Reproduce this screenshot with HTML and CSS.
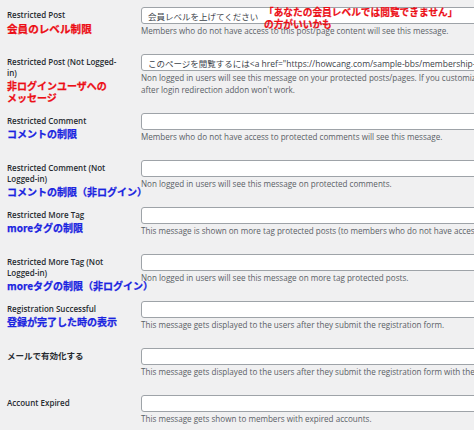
FILE: index.html
```html
<!DOCTYPE html>
<html lang="ja">
<head>
<meta charset="utf-8">
<title>Messages</title>
<link rel="stylesheet" href="styles.css">
</head>
<body>
<div class="form">
  <div class="row">
    <div class="label">
      <div class="name">Restricted Post</div>
      <div class="note red big">会員のレベル制限</div>
    </div>
    <div class="field">
      <input class="text" type="text" value="会員レベルを上げてください" readonly>
      <p class="desc">Members who do not have access to this post/page content will see this message.</p>
    </div>
  </div>

  <div class="row tall">
    <div class="label">
      <div class="name">Restricted Post (Not Logged-<br>in)</div>
      <div class="note red">非ログインユーザへの<br>メッセージ</div>
    </div>
    <div class="field">
      <input class="text" type="text" value="このページを閲覧するには&lt;a href=&quot;https://howcang.com/sample-bbs/membership-login/&quot;&gt;ログイン&lt;/a&gt;してください" readonly>
      <p class="desc">Non logged in users will see this message on your protected posts/pages. If you customize this message, the redirect<br>after login redirection addon won't work.</p>
    </div>
  </div>

  <div class="row">
    <div class="label">
      <div class="name">Restricted Comment</div>
      <div class="note blue">コメントの制限</div>
    </div>
    <div class="field">
      <input class="text" type="text" value="" readonly>
      <p class="desc">Members who do not have access to protected comments will see this message.</p>
    </div>
  </div>

  <div class="row">
    <div class="label">
      <div class="name">Restricted Comment (Not<br>Logged-in)</div>
      <div class="note blue">コメントの制限（非ログイン）</div>
    </div>
    <div class="field">
      <input class="text" type="text" value="" readonly>
      <p class="desc">Non logged in users will see this message on protected comments.</p>
    </div>
  </div>

  <div class="row">
    <div class="label">
      <div class="name">Restricted More Tag</div>
      <div class="note blue">moreタグの制限</div>
    </div>
    <div class="field">
      <input class="text" type="text" value="" readonly>
      <p class="desc">This message is shown on more tag protected posts (to members who do not have access to the post content).</p>
    </div>
  </div>

  <div class="row">
    <div class="label">
      <div class="name">Restricted More Tag (Not<br>Logged-in)</div>
      <div class="note blue">moreタグの制限（非ログイン）</div>
    </div>
    <div class="field">
      <input class="text" type="text" value="" readonly>
      <p class="desc">Non logged in users will see this message on more tag protected posts.</p>
    </div>
  </div>

  <div class="row">
    <div class="label">
      <div class="name">Registration Successful</div>
      <div class="note blue">登録が完了した時の表示</div>
    </div>
    <div class="field">
      <input class="text" type="text" value="" readonly>
      <p class="desc">This message gets displayed to the users after they submit the registration form.</p>
    </div>
  </div>

  <div class="row">
    <div class="label">
      <div class="name jp">メールで有効化する</div>
    </div>
    <div class="field">
      <input class="text" type="text" value="" readonly>
      <p class="desc">This message gets displayed to the users after they submit the registration form with the email activation enabled.</p>
    </div>
  </div>

  <div class="row">
    <div class="label">
      <div class="name">Account Expired</div>
    </div>
    <div class="field">
      <input class="text" type="text" value="" readonly>
      <p class="desc">This message gets shown to members with expired accounts.</p>
    </div>
  </div>

  <div class="callout">「あなたの会員レベルでは閲覧できません」<br>の方がいいかも</div>
</div>
</body>
</html>
```

FILE: styles.css
```css
html, body {
  margin: 0;
  padding: 0;
  overflow: hidden;
  background: #f0f0f1;
}
body {
  font-family: "Open Sans", "Noto Sans CJK JP", sans-serif;
  color: #1d2327;
}
.form {
  position: relative;
  width: 760px;
  padding-left: 7px;
}
.row {
  display: grid;
  grid-template-columns: 134px 600px;
  height: 30px;
  padding: 7px 0 10px;
}
.row.tall {
  height: 42px;
}
.label {
  padding-top: 2px;
  white-space: nowrap;
}
.name {
  font-size: 8px;
  font-weight: 600;
  line-height: 11px;
  color: #262b30;
}
.name.jp {
  font-family: "Noto Sans CJK JP", sans-serif;
  font-weight: 700;
  font-size: 8.5px;
}
.note {
  font-family: "Noto Sans CJK JP", sans-serif;
  font-weight: 700;
  font-size: 10px;
  line-height: 12px;
  margin-top: 2px;
  -webkit-text-stroke: 0.25px currentColor;
}
.note.big {
  font-size: 10.6px;
  line-height: 13px;
}
.red { color: #ec0e16; }
.blue { color: #1b24e0; }
.field {
  display: flex;
  flex-direction: column;
}
.text {
  box-sizing: border-box;
  width: 560px;
  height: 17px;
  margin: 0;
  padding: 0 6px;
  border: 1px solid #9ea3a8;
  border-radius: 3px;
  background: #fff;
  font-family: "Open Sans", "Noto Sans CJK JP", sans-serif;
  font-size: 8.5px;
  color: #3c434a;
  outline: none;
}
.desc {
  margin: 1px 0 0;
  font-size: 8.1px;
  line-height: 12px;
  color: #5a6066;
  white-space: nowrap;
}
.callout {
  position: absolute;
  left: 264px;
  top: 6px;
  font-family: "Noto Sans CJK JP", sans-serif;
  font-weight: 700;
  font-size: 9.7px;
  line-height: 12px;
  color: #ec0e16;
  -webkit-text-stroke: 0.2px currentColor;
}
```
